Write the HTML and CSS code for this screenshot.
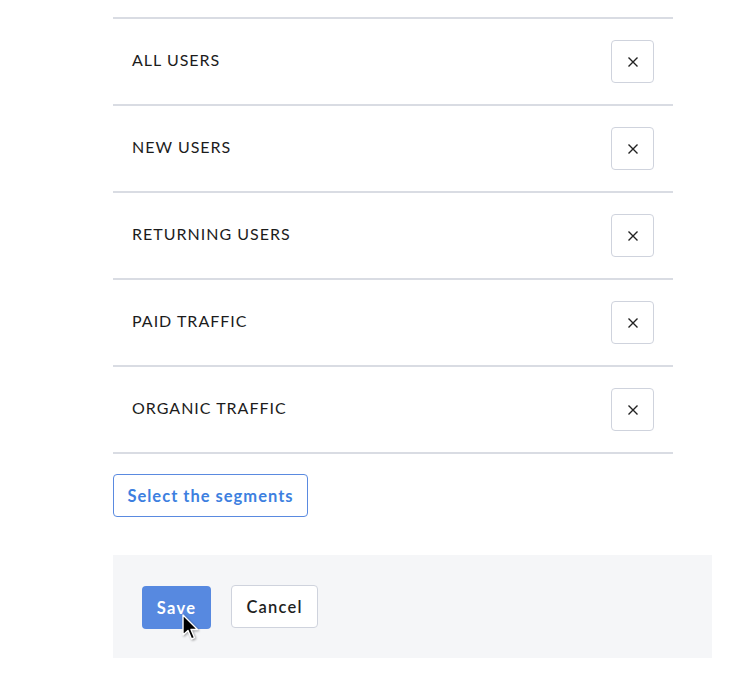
FILE: index.html
```html
<!DOCTYPE html>
<html>
<head>
<meta charset="utf-8">
<link rel="stylesheet" href="styles.css">
</head>
<body>
<div class="panel">
  <ul class="segments">
    <li class="segment"><span class="name">ALL USERS</span><button class="remove" aria-label="Remove"><svg viewBox="0 0 12 12" width="12" height="12"><path d="M1.5 1.5L10.5 10.5M10.5 1.5L1.5 10.5" stroke="#222" stroke-width="1.4" fill="none"/></svg></button></li>
    <li class="segment"><span class="name">NEW USERS</span><button class="remove" aria-label="Remove"><svg viewBox="0 0 12 12" width="12" height="12"><path d="M1.5 1.5L10.5 10.5M10.5 1.5L1.5 10.5" stroke="#222" stroke-width="1.4" fill="none"/></svg></button></li>
    <li class="segment"><span class="name">RETURNING USERS</span><button class="remove" aria-label="Remove"><svg viewBox="0 0 12 12" width="12" height="12"><path d="M1.5 1.5L10.5 10.5M10.5 1.5L1.5 10.5" stroke="#222" stroke-width="1.4" fill="none"/></svg></button></li>
    <li class="segment"><span class="name">PAID TRAFFIC</span><button class="remove" aria-label="Remove"><svg viewBox="0 0 12 12" width="12" height="12"><path d="M1.5 1.5L10.5 10.5M10.5 1.5L1.5 10.5" stroke="#222" stroke-width="1.4" fill="none"/></svg></button></li>
    <li class="segment"><span class="name">ORGANIC TRAFFIC</span><button class="remove" aria-label="Remove"><svg viewBox="0 0 12 12" width="12" height="12"><path d="M1.5 1.5L10.5 10.5M10.5 1.5L1.5 10.5" stroke="#222" stroke-width="1.4" fill="none"/></svg></button></li>
  </ul>
  <button class="select-btn">Select the segments</button>
  <div class="footer">
    <div class="save-wrap">
      <button class="save">Save</button>
      <svg class="cursor" viewBox="0 0 18 28" width="18" height="28"><path d="M1 1 L1 21 L6 16.5 L9.5 25 L12.5 23.7 L9 15.5 L15.5 15.5 Z" fill="#000" stroke="#fff" stroke-width="1.4" stroke-linejoin="round"/></svg>
    </div>
    <button class="cancel">Cancel</button>
  </div>
</div>
</body>
</html>
```
FILE: styles.css
```css
html, body {
  margin: 0;
  padding: 0;
  background: #fff;
}
body {
  font-family: "Lato", "Open Sans", sans-serif;
  color: #1f1f1f;
}
.panel {
  width: 599px;
  margin-left: 113px;
  padding-top: 17px;
}
.segments {
  list-style: none;
  margin: 0;
  padding: 0;
  width: 560px;
  border-top: 2px solid #d9dce3;
}
.segment {
  display: flex;
  align-items: center;
  justify-content: space-between;
  height: 85px;
  border-bottom: 2px solid #d9dce3;
  padding: 0 19px 0 19px;
}
.name {
  font-size: 16px;
  letter-spacing: 1px;
  color: #1c1c1c;
  margin-top: -5px;
}
.remove {
  width: 43px;
  height: 43px;
  box-sizing: border-box;
  border: 1px solid #cfd3dd;
  border-radius: 4px;
  background: #fff;
  display: flex;
  align-items: center;
  justify-content: center;
  padding: 0;
}
.select-btn {
  margin-top: 20px;
  height: 43px;
  width: 195px;
  box-sizing: border-box;
  border: 1px solid #5a8ae0;
  border-radius: 4px;
  background: #fff;
  color: #3d7fe0;
  font-family: "Lato", sans-serif;
  font-weight: 700;
  font-size: 16.5px;
  letter-spacing: 1px;
  padding: 0;
  display: block;
}
.footer {
  margin-top: 38px;
  background: #f5f6f8;
  height: 103px;
  box-sizing: border-box;
  padding: 30px 29px 0 29px;
  display: flex;
  align-items: flex-start;
  gap: 20px;
}
.save-wrap {
  position: relative;
}
.save {
  width: 69px;
  height: 43px;
  border: none;
  border-radius: 4px;
  background: #5789e0;
  color: #fff;
  font-family: "Lato", sans-serif;
  font-weight: 700;
  font-size: 16.5px;
  letter-spacing: 1.3px;
  padding: 0;
  margin-top: 1px;
  display: block;
}
.cursor {
  position: absolute;
  left: 40px;
  top: 29px;
  filter: drop-shadow(1px 1px 1px rgba(0,0,0,0.35));
}
.cancel {
  width: 87px;
  height: 43px;
  box-sizing: border-box;
  border: 1px solid #cfd3dd;
  border-radius: 4px;
  background: #fff;
  color: #1f1f1f;
  font-family: "Lato", sans-serif;
  font-weight: 600;
  font-size: 16.5px;
  letter-spacing: 1.2px;
  padding: 0;
}
```
